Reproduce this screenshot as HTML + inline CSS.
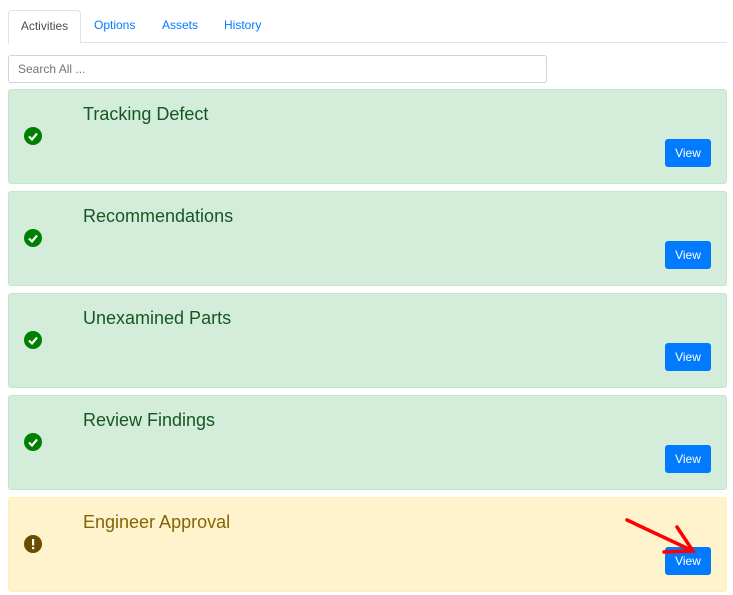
<!DOCTYPE html><html><head><style>
body{margin:0;width:733px;height:595px;background:#fff;font-family:"Liberation Sans",sans-serif;position:relative;overflow:hidden}
.tabs{position:absolute;left:8px;top:42px;width:719px;border-top:1px solid #dee2e6}
.tab{position:absolute;top:10px;height:32px;line-height:31px;font-size:12px;color:#007bff}
.act{left:8px;width:71px;border:1px solid #dee2e6;border-bottom:1px solid #fff;border-radius:4px 4px 0 0;color:#495057;text-align:center;background:#fff;z-index:2;height:32px}
.search{position:absolute;left:8px;top:55px;height:26px;border:1px solid #ced4da;border-radius:3px;font-size:12px;color:#6c757d;line-height:26px;padding-left:9px;width:528px}
.card{position:absolute;left:8px;width:717px;height:93px;border:1px solid #c3e6cb;background:#d4edda;border-radius:3px}
.card.w{background:#fff3cd;border-color:#ffeeba}
.t{position:absolute;left:74px;top:14px;font-size:18px;color:#155724}
.w .t{color:#856404}
.ic{position:absolute;left:15px;top:37px;width:18px;height:18px;border-radius:50%;background:#008000}
.w .ic{background:#6b4c00}
.btn{position:absolute;left:656px;top:49px;width:46px;height:28px;background:#007bff;border-radius:3px;color:#fff;font-size:12px;text-align:center;line-height:28px}
</style></head><body>
<div class="tabs"></div>
<div class="tab act">Activities</div>
<div class="tab" style="left:94px">Options</div>
<div class="tab" style="left:162px">Assets</div>
<div class="tab" style="left:224px">History</div>
<div class="search">Search All ...</div>
<div class="card" style="top:89px"><div class="t">Tracking Defect</div><div class="ic"><svg width="18" height="18"><path d="M5 9.5l3 3 5-6" stroke="#fff" stroke-width="2.2" fill="none"/></svg></div><div class="btn">View</div></div>
<div class="card" style="top:191px"><div class="t">Recommendations</div><div class="ic"><svg width="18" height="18"><path d="M5 9.5l3 3 5-6" stroke="#fff" stroke-width="2.2" fill="none"/></svg></div><div class="btn">View</div></div>
<div class="card" style="top:293px"><div class="t">Unexamined Parts</div><div class="ic"><svg width="18" height="18"><path d="M5 9.5l3 3 5-6" stroke="#fff" stroke-width="2.2" fill="none"/></svg></div><div class="btn">View</div></div>
<div class="card" style="top:395px"><div class="t">Review Findings</div><div class="ic"><svg width="18" height="18"><path d="M5 9.5l3 3 5-6" stroke="#fff" stroke-width="2.2" fill="none"/></svg></div><div class="btn">View</div></div>
<div class="card w" style="top:497px"><div class="t">Engineer Approval</div><div class="ic"><svg width="18" height="18"><rect x="8" y="4" width="2.2" height="6.5" fill="#fff"/><rect x="8" y="12" width="2.2" height="2.2" fill="#fff"/></svg></div><div class="btn">View</div></div>
<svg style="position:absolute;left:0;top:0" width="733" height="595"><path d="M627 520L693 551M677 527L693 551L664 552" stroke="#f00" stroke-width="3.5" fill="none" stroke-linecap="round"/></svg>
</body></html>
